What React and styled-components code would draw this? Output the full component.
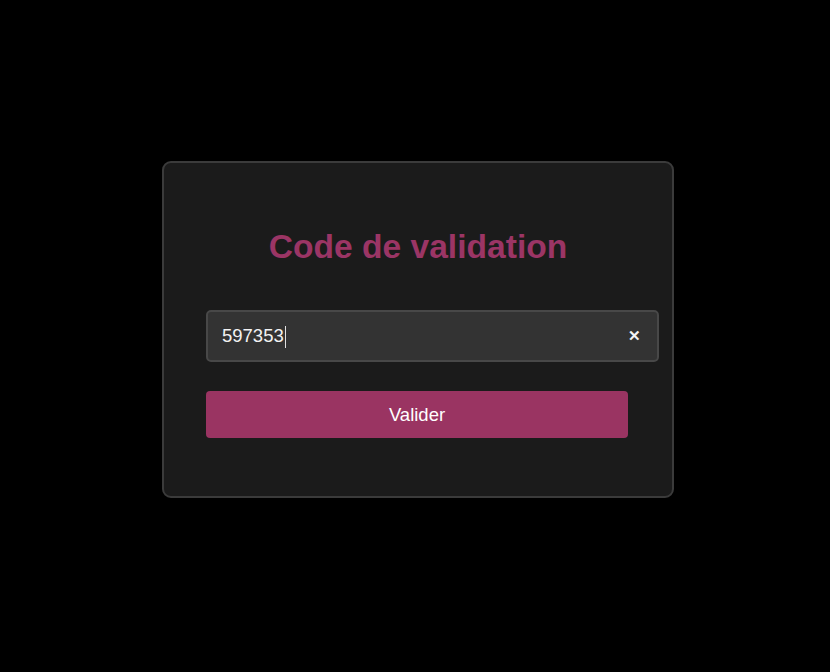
import styled, { createGlobalStyle } from 'styled-components'
import { useState } from 'react'

const GlobalStyle = createGlobalStyle`
  html, body {
    margin: 0;
    padding: 0;
    background: #000;
    font-family: 'Liberation Sans', Arial, sans-serif;
  }
`

function App() {
  const [code, setCode] = useState('597353')

  return (
    <Page>
      <GlobalStyle />
      <Card>
        <Title>Code de validation</Title>
        <Field>
          <Input
            type='text'
            value={code}
            onChange={(e) => setCode(e.target.value)}
          />
          <Caret />
          <Clear type='button' onClick={() => setCode('')}>
            ✕
          </Clear>
        </Field>
        <Submit type='button'>Valider</Submit>
      </Card>
    </Page>
  )
}

export default App

const Page = styled.div`
  min-height: 100vh;
  box-sizing: border-box;
  padding: 161px 0 0 162px;
  background: #000;
`

const Card = styled.div`
  width: 512px;
  box-sizing: border-box;
  padding: 64px 42px 58px;
  background: #1b1b1b;
  border: 2px solid #3b3b3b;
  border-radius: 9px;
  display: flex;
  flex-direction: column;
`

const Title = styled.h2`
  margin: 0 0 43px;
  height: 40px;
  line-height: 40px;
  text-align: center;
  font-size: 33.6px;
  font-weight: bold;
  color: #9b3565;
`

const Field = styled.div`
  position: relative;
  width: 453px;
  height: 52px;
  box-sizing: border-box;
  margin-bottom: 29px;
  background: #333333;
  border: 2px solid #484848;
  border-radius: 5px;
  display: flex;
  align-items: center;
`

const Input = styled.input`
  flex: 1;
  height: 100%;
  padding: 0 0 0 14px;
  border: none;
  outline: none;
  background: transparent;
  color: #f2f2f2;
  font-family: 'Liberation Sans', Arial, sans-serif;
  font-size: 18.5px;
`

const Caret = styled.span`
  position: absolute;
  left: 77px;
  top: 14px;
  width: 1px;
  height: 22px;
  background: #e0e0e0;
`

const Clear = styled.button`
  width: 24px;
  height: 24px;
  margin-right: 11px;
  padding: 0;
  border: none;
  background: none;
  color: #f5f5f5;
  font-size: 15px;
  font-weight: bold;
  line-height: 24px;
  cursor: pointer;
`

const Submit = styled.button`
  width: 422px;
  height: 47px;
  border: none;
  border-radius: 4px;
  background: #9a3462;
  color: #fff;
  font-family: 'Liberation Sans', Arial, sans-serif;
  font-size: 18.5px;
  cursor: pointer;
`
